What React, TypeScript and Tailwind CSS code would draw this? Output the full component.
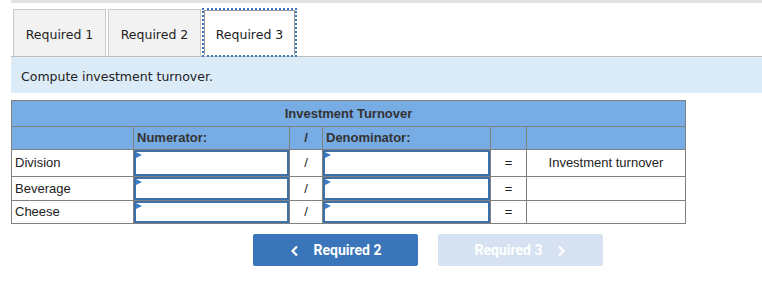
import React from "react";

const Flag = () => (
  <svg className="absolute left-0 top-0" width="7" height="7" viewBox="0 0 7 7">
    <polygon points="0,0 6,3 0,6" fill="#3b7bc4" />
  </svg>
);

const InputCell = ({ h }: { h: string }) => (
  <td className="p-0 border border-[#808080] align-top">
    <div className={`relative w-full border-2 border-[#3d6fa8] bg-white box-border ${h}`}>
      <Flag />
    </div>
  </td>
);

const rows = [
  { label: "Division", result: "Investment turnover", h: "h-[27px]", ih: "h-[26px]" },
  { label: "Beverage", result: "", h: "h-[24px]", ih: "h-[23px]" },
  { label: "Cheese", result: "", h: "h-[23px]", ih: "h-[22px]" },
];

export default function App() {
  return (
    <div className="w-[762px] h-[293px] bg-white relative" style={{ fontFamily: "'DejaVu Sans', Verdana, sans-serif" }}>
      <div className="ml-[11px] h-[3px] bg-[#e3e3e3]" />
      <div className="ml-[11px] mt-[7px] flex items-end border-b border-[#bdbdbd] pl-[2px] h-[47px]">
        <div className="w-[93px] h-[47px] pt-[5px] bg-[#f2f2f2] border border-[#c8c8c8] border-b-0 flex items-center justify-center text-[12.5px] text-[#222]">
          Required 1
        </div>
        <div className="ml-[2px] w-[93px] h-[47px] pt-[5px] bg-[#f2f2f2] border border-[#c8c8c8] border-b-0 flex items-center justify-center text-[12.5px] text-[#222]">
          Required 2
        </div>
        <div className="ml-[1px] w-[95px] h-[49px] -mb-[1px] border-2 border-dotted border-[#3b78c2] p-0">
          <div className="w-full h-full pt-[5px] bg-white border border-[#999] border-b-0 flex items-center justify-center text-[12.5px] text-[#222]">
            Required 3
          </div>
        </div>
      </div>
      <div className="ml-[11px] h-[36px] pt-[4px] bg-[#dcebf8] flex items-center pl-[10px] text-[12.5px] text-[#222]">
        Compute investment turnover.
      </div>
      <div className="ml-[11px] mt-[7px]" style={{ fontFamily: "'Liberation Sans', Arial, sans-serif" }}>
        <table className="border-collapse table-fixed text-[13px] text-[#222]" style={{ width: 674 }}>
          <colgroup>
            <col style={{ width: 122 }} />
            <col style={{ width: 156 }} />
            <col style={{ width: 33 }} />
            <col style={{ width: 168 }} />
            <col style={{ width: 36 }} />
            <col style={{ width: 159 }} />
          </colgroup>
          <tbody>
            <tr className="h-[26px] bg-[#78ace4]">
              <td colSpan={6} className="border border-[#808080] text-center font-bold text-[#333]">
                Investment Turnover
              </td>
            </tr>
            <tr className="h-[23px] bg-[#78ace4] font-bold text-[#333]">
              <td className="border border-[#808080]" />
              <td className="border border-[#808080] pl-[3px]">Numerator:</td>
              <td className="border border-[#808080] text-center">/</td>
              <td className="border border-[#808080] pl-[3px]">Denominator:</td>
              <td className="border border-[#808080]" />
              <td className="border border-[#808080]" />
            </tr>
            {rows.map((r) => (
              <tr key={r.label} className={r.h}>
                <td className="border border-[#808080] pl-[3px]">{r.label}</td>
                <InputCell h={r.ih} />
                <td className="border border-[#808080] text-center">/</td>
                <InputCell h={r.ih} />
                <td className="border border-[#808080] text-center">=</td>
                <td className="border border-[#808080] text-center">{r.result}</td>
              </tr>
            ))}
          </tbody>
        </table>
      </div>
      <div className="flex mt-[10px] ml-[253px] gap-[20px]" style={{ fontFamily: "Roboto, sans-serif" }}>
        <div className="w-[165px] h-[32px] pt-[1px] rounded-[2px] bg-[#3a75ba] text-white font-bold text-[14px] flex items-center justify-center">
          <svg width="10" height="12" viewBox="0 0 10 12" className="mr-[14px]">
            <polyline points="7,1.5 2.5,6 7,10.5" fill="none" stroke="white" strokeWidth="2.2" />
          </svg>
          Required 2
        </div>
        <div className="w-[165px] h-[32px] pt-[1px] rounded-[2px] bg-[#d6e2f1] text-white font-bold text-[14px] flex items-center justify-center">
          Required 3
          <svg width="10" height="12" viewBox="0 0 10 12" className="ml-[14px]">
            <polyline points="3,1.5 7.5,6 3,10.5" fill="none" stroke="white" strokeWidth="2.2" />
          </svg>
        </div>
      </div>
    </div>
  );
}
